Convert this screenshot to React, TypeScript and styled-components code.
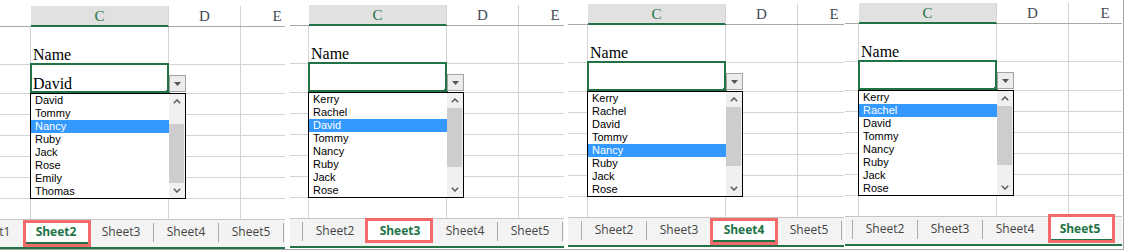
import React from 'react';
import styled, { createGlobalStyle } from 'styled-components';

const GREEN = '#217346';
const GRID = '#d4d4d4';

const GlobalStyle = createGlobalStyle`
  html, body { margin: 0; padding: 0; background: #ffffff; }
  #root { width: 1126px; height: 251px; overflow: hidden; }
`;

const Frame = styled.div`
  width: 1123px;
  height: 249px;
  display: flex;
  align-items: flex-start;
  background: #ffffff;
  border-right: 1px solid #a6a6a6;
  border-bottom: 1px solid #a6a6a6;
  overflow: hidden;
`;

const PanelBox = styled.div<{ $w: number; $gap: number; $top: number }>`
  position: relative;
  flex: none;
  width: ${(p) => p.$w}px;
  margin-left: ${(p) => p.$gap}px;
  padding-top: ${(p) => p.$top}px;
  overflow: hidden;
  display: flex;
  flex-direction: column;
`;

const Row = styled.div<{ $stub: number; $h: number; $line?: boolean }>`
  display: grid;
  grid-template-columns: ${(p) => p.$stub}px 138px 72px 72px;
  height: ${(p) => p.$h}px;
  border-bottom: ${(p) => (p.$line === false ? 'none' : `1px solid ${GRID}`)};
`;

const HeaderRow = styled(Row)`
  border-bottom: 1px solid #a9a9a9;
`;

const Cell = styled.div<{ $noRight?: boolean }>`
  position: relative;
  border-right: ${(p) => (p.$noRight ? 'none' : `1px solid ${GRID}`)};
  display: flex;
  align-items: flex-end;
  padding-left: 2px;
  font-family: 'Liberation Serif', 'Times New Roman', serif;
  font-size: 16px;
  line-height: 18px;
  color: #000;
`;

const HeadCell = styled.div<{ $sel?: boolean; $noRight?: boolean }>`
  border-right: ${(p) => (p.$noRight ? 'none' : `1px solid ${GRID}`)};
  background: ${(p) => (p.$sel ? '#e1e1e1' : '#ffffff')};
  box-shadow: ${(p) => (p.$sel ? `inset 0 -1px 0 ${GREEN}, 0 1px 0 ${GREEN}` : 'none')};
  text-align: center;
  font-family: 'Liberation Serif', 'Times New Roman', serif;
  font-size: 15px;
  line-height: 20px;
  color: ${(p) => (p.$sel ? GREEN : '#444a55')};
`;

const Blank = styled.div``;

const Selection = styled.div`
  position: absolute;
  left: -1px;
  right: -1px;
  top: -2px;
  bottom: 0;
  border: 2px solid ${GREEN};
  pointer-events: none;
  &::after {
    content: '';
    position: absolute;
    right: -3px;
    bottom: -3px;
    width: 4px;
    height: 4px;
    background: ${GREEN};
  }
`;

const DropButton = styled.div`
  position: absolute;
  left: calc(100% + 1px);
  bottom: 1px;
  width: 15px;
  height: 15px;
  border: 1px solid #a3a3a3;
  background: #ececec;
  display: flex;
  align-items: center;
  justify-content: center;
  z-index: 3;
`;

const ListBox = styled.div`
  position: absolute;
  left: -1px;
  top: 100%;
  width: 154px;
  height: 104px;
  border: 1px solid #000;
  background: #fff;
  display: flex;
  z-index: 4;
`;

const Items = styled.div`
  flex: 1;
  display: flex;
  flex-direction: column;
`;

const Item = styled.div<{ $sel: boolean }>`
  height: 13px;
  padding-left: 4px;
  font-family: 'Liberation Sans', Arial, sans-serif;
  font-size: 11px;
  line-height: 13px;
  color: ${(p) => (p.$sel ? '#ffffff' : '#000000')};
  background: ${(p) => (p.$sel ? '#3399ff' : 'transparent')};
  white-space: nowrap;
`;

const ScrollBar = styled.div`
  width: 16px;
  background: #f0f0f0;
  display: flex;
  flex-direction: column;
`;

const ArrowBtn = styled.div`
  height: 15px;
  display: flex;
  align-items: center;
  justify-content: center;
`;

const Track = styled.div`
  position: relative;
  flex: 1;
`;

const Thumb = styled.div`
  position: absolute;
  left: 0;
  right: 1px;
  background: #cdcdcd;
`;

const TabBar = styled.div<{ $lead: number }>`
  height: 27px;
  border-top: 1px solid #c6c6c6;
  border-bottom: 2px solid ${GREEN};
  background: #f3f3f3;
  display: flex;
  align-items: flex-start;
  padding-left: ${(p) => Math.max(p.$lead, 0)}px;
  & > :first-child {
    margin-left: ${(p) => Math.min(p.$lead, 0)}px;
  }
`;

const Tab = styled.div<{ $active: boolean }>`
  flex: none;
  width: 64px;
  height: 22px;
  border-bottom: 2px solid ${(p) => (p.$active ? GREEN : 'transparent')};
  background: ${(p) => (p.$active ? '#ffffff' : 'transparent')};
  text-align: center;
  font-family: 'Open Sans', 'Liberation Sans', Arial, sans-serif;
  font-size: 12px;
  line-height: 23px;
  font-weight: ${(p) => (p.$active ? 700 : 400)};
  color: ${(p) => (p.$active ? GREEN : '#444444')};
  white-space: nowrap;
`;

const TabSep = styled.div<{ $hidden: boolean }>`
  flex: none;
  width: 1px;
  height: 19px;
  margin-top: 3px;
  background: ${(p) => (p.$hidden ? 'transparent' : '#ababab')};
`;

const RedBox = styled.div`
  position: absolute;
  border: 3px solid #f26a6a;
  pointer-events: none;
  z-index: 5;
`;

const Chevron = ({ up }: { up?: boolean }) => (
  <svg width="8" height="5" viewBox="0 0 8 5">
    <polyline
      points={up ? '0.8,4.2 4,1 7.2,4.2' : '0.8,0.8 4,4 7.2,0.8'}
      fill="none"
      stroke="#5a5a5a"
      strokeWidth="1.5"
    />
  </svg>
);

const Caret = () => (
  <svg width="7" height="4" viewBox="0 0 7 4">
    <polygon points="0,0 7,0 3.5,4" fill="#555" />
  </svg>
);

const NAMES = ['Kerry', 'Rachel', 'David', 'Tommy', 'Nancy', 'Ruby', 'Jack', 'Rose', 'Emily', 'Thomas'];
const SHEETS = ['Sheet1', 'Sheet2', 'Sheet3', 'Sheet4', 'Sheet5'];

type PanelCfg = {
  w: number;
  gap: number;
  top: number;
  stub: number;
  value: string;
  scroll: number;
  selected: string;
  active: number;
  lead: number;
  box: { left: number; top: number; w: number; h: number };
};

const PANELS: PanelCfg[] = [
  { w: 285, gap: 0, top: 6, stub: 31, value: 'David', scroll: 2, selected: 'Nancy', active: 1, lead: -41, box: { left: 23, top: 220, w: 68, h: 27 } },
  { w: 274, gap: 5, top: 5, stub: 19, value: '', scroll: 0, selected: 'David', active: 2, lead: 12, box: { left: 75, top: 218, w: 68, h: 25 } },
  { w: 276, gap: 4, top: 4, stub: 20, value: '', scroll: 0, selected: 'Nancy', active: 3, lead: 13, box: { left: 142, top: 218, w: 68, h: 27 } },
  { w: 277, gap: 1, top: 3, stub: 14, value: '', scroll: 0, selected: 'Rachel', active: 4, lead: 7, box: { left: 203, top: 214, w: 67, h: 29 } },
];

const VISIBLE = 8;
const TRACK = 74;

function Panel({ cfg }: { cfg: PanelCfg }) {
  const shown = NAMES.slice(cfg.scroll, cfg.scroll + VISIBLE);
  const thumbH = (VISIBLE / NAMES.length) * TRACK;
  const thumbTop = (cfg.scroll / NAMES.length) * TRACK;
  const first = cfg.lead < 0 ? 0 : 1;
  return (
    <PanelBox $w={cfg.w} $gap={cfg.gap} $top={cfg.top}>
      <HeaderRow $stub={cfg.stub} $h={20}>
        <Blank />
        <HeadCell $sel>C</HeadCell>
        <HeadCell>D</HeadCell>
        <HeadCell $noRight>E</HeadCell>
      </HeaderRow>
      <Row $stub={cfg.stub} $h={37}>
        <Cell />
        <Cell>Name</Cell>
        <Cell />
        <Cell $noRight />
      </Row>
      <Row $stub={cfg.stub} $h={28}>
        <Cell />
        <Cell>
          {cfg.value}
          <Selection />
          <DropButton>
            <Caret />
          </DropButton>
          <ListBox>
            <Items>
              {shown.map((n) => (
                <Item key={n} $sel={n === cfg.selected}>
                  {n}
                </Item>
              ))}
            </Items>
            <ScrollBar>
              <ArrowBtn>
                <Chevron up />
              </ArrowBtn>
              <Track>
                <Thumb style={{ top: thumbTop, height: thumbH }} />
              </Track>
              <ArrowBtn>
                <Chevron />
              </ArrowBtn>
            </ScrollBar>
          </ListBox>
        </Cell>
        <Cell />
        <Cell $noRight />
      </Row>
      {[0, 1, 2, 3, 4, 5].map((i) => (
        <Row key={i} $stub={cfg.stub} $h={20} $line={i !== 5}>
          <Cell />
          <Cell />
          <Cell />
          <Cell $noRight />
        </Row>
      ))}
      <TabBar $lead={cfg.lead}>
        {first === 1 && <TabSep $hidden={cfg.active === 1} />}
        {SHEETS.slice(first).map((s, k) => {
          const i = k + first;
          return (
            <React.Fragment key={s}>
              <Tab $active={i === cfg.active}>{s}</Tab>
              <TabSep $hidden={i === cfg.active || i === cfg.active - 1} />
            </React.Fragment>
          );
        })}
      </TabBar>
      <RedBox
        style={{ left: cfg.box.left, top: cfg.box.top, width: cfg.box.w - 6, height: cfg.box.h - 6 }}
      />
    </PanelBox>
  );
}

export default function App() {
  return (
    <>
      <GlobalStyle />
      <Frame>
        {PANELS.map((p, i) => (
          <Panel key={i} cfg={p} />
        ))}
      </Frame>
    </>
  );
}
